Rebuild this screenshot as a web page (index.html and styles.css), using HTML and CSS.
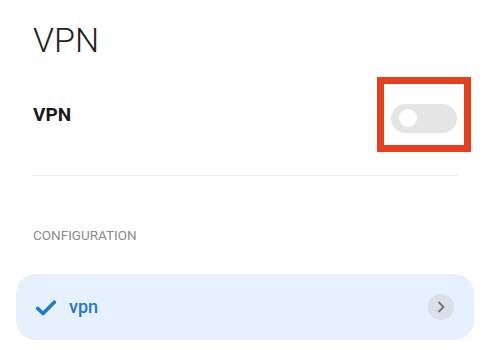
FILE: index.html
```html
<!DOCTYPE html>
<html>
<head>
<meta charset="utf-8">
<link rel="stylesheet" href="styles.css">
</head>
<body>
<div class="page">
  <h1 class="title">VPN</h1>
  <div class="row">
    <span class="label">VPN</span>
    <div class="toggle-wrap">
      <div class="toggle"><span class="knob"></span></div>
      <div class="highlight"></div>
    </div>
  </div>
  <div class="divider"></div>
  <div class="section">CONFIGURATION</div>
</div>
<div class="card">
  <svg class="check" width="20" height="16" viewBox="0 0 20 16"><polyline points="1.8,8.5 7,13.5 18.3,2.2" fill="none" stroke="#1f78d1" stroke-width="3.6" stroke-linecap="round" stroke-linejoin="round"/></svg>
  <span class="name">vpn</span>
  <span class="chev"><svg width="10" height="12" viewBox="0 0 10 12"><polyline points="3,1.5 7.5,6 3,10.5" fill="none" stroke="#6e7680" stroke-width="1.8" stroke-linecap="round" stroke-linejoin="round"/></svg></span>
</div>
</body>
</html>
```
FILE: styles.css
```css
html, body {
  margin: 0;
  padding: 0;
  background: #ffffff;
  font-family: Roboto, "Liberation Sans", sans-serif;
}
.page {
  padding: 20px 32px 0 33px;
}
.title {
  margin: 0;
  font-size: 34px;
  font-weight: 300;
  line-height: 40px;
  color: #222222;
}
.row {
  display: flex;
  align-items: center;
  justify-content: space-between;
  height: 60px;
  margin-top: 28px;
}
.label {
  font-size: 19px;
  font-weight: 700;
  line-height: 20px;
  color: #1a1a1a;
  margin-bottom: 7px;
}
.toggle-wrap {
  position: relative;
  margin-right: 1px;
}
.toggle {
  width: 66px;
  height: 29px;
  border-radius: 15px;
  background: #e5e5e5;
  display: flex;
  align-items: center;
  padding-left: 8px;
  box-sizing: border-box;
}
.knob {
  width: 18px;
  height: 18px;
  border-radius: 50%;
  background: #ffffff;
}
.highlight {
  position: absolute;
  left: -14px;
  top: -27px;
  width: 94px;
  height: 75px;
  box-sizing: border-box;
  border: 7px solid #e63e1f;
}
.divider {
  height: 1px;
  background: #ececec;
  margin-top: 27px;
}
.section {
  margin-top: 51px;
  font-size: 13.5px;
  line-height: 16px;
  color: #8c8c8c;
}
.card {
  margin: 31px 16px 0 16px;
  height: 66px;
  border-radius: 20px;
  background: #e6f1fd;
  display: flex;
  align-items: center;
  padding: 0 20px 0 20px;
  box-sizing: border-box;
}
.check {
  display: block;
  margin-top: 1px;
}
.name {
  margin-left: 13px;
  font-size: 18px;
  font-weight: 500;
  color: #1f78d1;
  flex: 1;
  margin-bottom: 2px;
}
.chev {
  width: 26px;
  height: 26px;
  border-radius: 50%;
  background: #d9e0e8;
  display: flex;
  align-items: center;
  justify-content: center;
}
.chev svg {
  display: block;
}
```
